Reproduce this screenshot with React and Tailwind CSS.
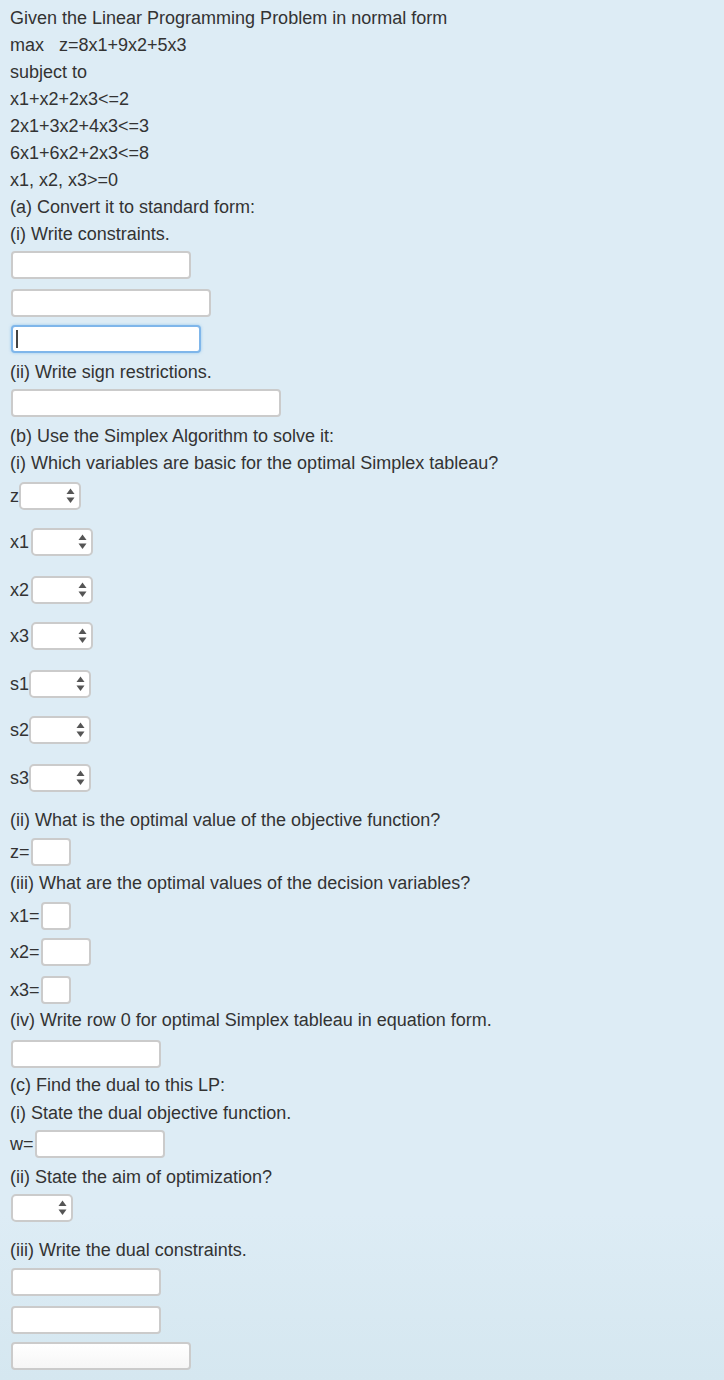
import React from "react";

const font = { fontFamily: '"Liberation Sans", Arial, Helvetica, sans-serif' };

function Line({ children, className = "" }) {
  return (
    <div className={`h-[27px] leading-[27px] text-[18px] text-[#333333] whitespace-nowrap ${className}`}>
      {children}
    </div>
  );
}

function Box({ className = "", focused = false }) {
  if (focused) {
    return (
      <div className={`relative h-[28px] rounded-[4px] border-2 border-[#7fb6ea] bg-white shadow-[0_0_3px_rgba(102,175,233,0.6)] ${className}`}>
        <span className="absolute left-[3px] top-[3px] h-[18px] w-[2px] bg-[#444444]" />
      </div>
    );
  }
  return (
    <div className={`h-[28px] rounded-[4px] border-2 border-[#cbcbcb] bg-white ${className}`} />
  );
}

function Arrows() {
  return (
    <svg width="9" height="16" viewBox="0 0 9 16" className="absolute right-[4px] top-[4px]">
      <path d="M4.5 0.5 L8.5 6 L0.5 6 Z" fill="#555555" />
      <path d="M0.5 9.5 L8.5 9.5 L4.5 15 Z" fill="#555555" />
    </svg>
  );
}

function Select({ className = "" }) {
  return (
    <div className={`relative h-[28px] w-[62px] rounded-[5px] border-2 border-[#cbcbcb] bg-white ${className}`}>
      <Arrows />
    </div>
  );
}

function LabeledSelect({ label, w, className = "" }) {
  return (
    <div className={`flex items-center ${className}`}>
      <span className={`text-[18px] leading-none text-[#333333] whitespace-nowrap ${w}`}>{label}</span>
      <Select />
    </div>
  );
}

function LabeledBox({ label, w, box, className = "" }) {
  return (
    <div className={`flex items-center ${className}`}>
      <span className={`text-[18px] leading-none text-[#333333] whitespace-nowrap ${w}`}>{label}</span>
      <Box className={box} />
    </div>
  );
}

export default function App() {
  return (
    <div
      style={font}
      className="min-h-[1380px] w-[724px] bg-[linear-gradient(to_bottom,#ddecf5_0%,#ddecf5_88%,#d5e7f0_100%)] pl-[10px] pt-[5px]"
    >
      <Line>Given the Linear Programming Problem in normal form</Line>
      <Line>max&nbsp;&nbsp; z=8x1+9x2+5x3</Line>
      <Line>subject to</Line>
      <Line>x1+x2+2x3&lt;=2</Line>
      <Line>2x1+3x2+4x3&lt;=3</Line>
      <Line>6x1+6x2+2x3&lt;=8</Line>
      <Line>x1, x2, x3&gt;=0</Line>
      <Line>(a) Convert it to standard form:</Line>
      <Line>(i) Write constraints.</Line>

      <Box className="ml-px mt-[3px] w-[180px]" />
      <Box className="ml-px mt-[10px] w-[200px]" />
      <Box focused className="ml-px mt-[8px] w-[190px]" />

      <Line className="mt-[6px]">(ii) Write sign restrictions.</Line>
      <Box className="ml-px mt-[3px] w-[270px]" />

      <Line className="mt-[6px] h-[26px]">(b) Use the Simplex Algorithm to solve it:</Line>
      <Line>(i) Which variables are basic for the optimal Simplex tableau?</Line>

      <LabeledSelect label="z" w="w-[9px]" className="mt-[5px]" />
      <LabeledSelect label="x1" w="w-[21px]" className="mt-[18px]" />
      <LabeledSelect label="x2" w="w-[21px]" className="mt-[20px]" />
      <LabeledSelect label="x3" w="w-[21px]" className="mt-[18px]" />
      <LabeledSelect label="s1" w="w-[19px]" className="mt-[20px]" />
      <LabeledSelect label="s2" w="w-[19px]" className="mt-[18px]" />
      <LabeledSelect label="s3" w="w-[19px]" className="mt-[20px]" />

      <Line className="mt-[15px]">(ii) What is the optimal value of the objective function?</Line>
      <LabeledBox label="z=" w="w-[21px]" box="w-[40px]" className="mt-[4px]" />

      <Line className="mt-[4px]">(iii) What are the optimal values of the decision variables?</Line>
      <LabeledBox label="x1=" w="w-[31px]" box="w-[30px]" className="mt-[5px]" />
      <LabeledBox label="x2=" w="w-[31px]" box="w-[50px]" className="mt-[8px]" />
      <LabeledBox label="x3=" w="w-[31px]" box="w-[30px]" className="mt-[10px]" />

      <Line className="mt-[3px]">(iv) Write row 0 for optimal Simplex tableau in equation form.</Line>
      <Box className="ml-px mt-[6px] w-[150px]" />

      <Line className="mt-[4px]">(c) Find the dual to this LP:</Line>
      <Line className="mt-[1px]">(i) State the dual objective function.</Line>
      <LabeledBox label="w=" w="w-[25px]" box="w-[130px]" className="mt-[3px]" />

      <Line className="mt-[6px]">(ii) State the aim of optimization?</Line>
      <Select className="ml-px mt-[3px]" />

      <Line className="mt-[15px]">(iii) Write the dual constraints.</Line>
      <Box className="ml-px mt-[4px] w-[150px]" />
      <Box className="ml-px mt-[10px] w-[150px]" />
      <div className="ml-px mt-[8px] h-[28px] w-[180px] rounded-[4px] border-2 border-[#cbcbcb] bg-[linear-gradient(to_bottom,#ffffff,#f6f6f6)]" />
    </div>
  );
}
